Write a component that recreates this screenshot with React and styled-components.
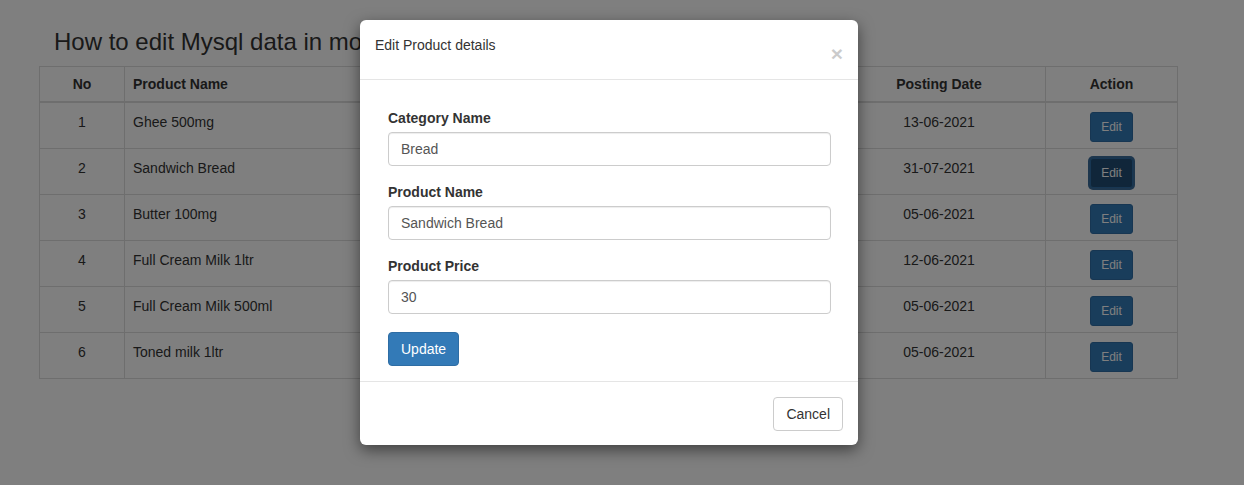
import React from "react";
import styled, { createGlobalStyle } from "styled-components";

const Global = createGlobalStyle`
  body { margin: 0; font-family: "Liberation Sans", Arial, sans-serif; font-size: 14px; color: #333; background: #fff; }
`;
const Page = styled.div` position: relative; width: 1244px; height: 485px; overflow: hidden; `;
const Container = styled.div` padding: 27px 66px 0 39px; `;
const Title = styled.h2`
  margin: 0 0 9px 15px; font-size: 24px; font-weight: 400; line-height: 30px;
  width: 306px; white-space: nowrap; overflow: hidden;
`;
const Table = styled.table` border-collapse: collapse; width: 1139px; table-layout: fixed; `;
const Th = styled.th`
  border: 1px solid #ddd; border-bottom: 2px solid #ddd; height: 34px; padding: 0 8px;
  text-align: ${p => p.$left ? "left" : "center"}; width: ${p => p.$w || "auto"};
`;
const Td = styled.td`
  border: 1px solid #ddd; height: 46px; padding: 11px 8px 0; vertical-align: top; box-sizing: border-box;
  text-align: ${p => p.$left ? "left" : "center"};
`;
const EditBtn = styled.button`
  font: 12px "Liberation Sans", Arial, sans-serif; color: #fff; background: #337ab7; border: 1px solid #2e6da4;
  border-radius: 3px; width: 43px; height: 30px; padding: 0; margin-top: -2px;
  ${p => p.$active && "background:#204d74; box-shadow: 0 0 0 2px #3b6c9a;"}
`;
const Backdrop = styled.div` position: absolute; inset: 0; background: rgba(0,0,0,0.5); `;
const Modal = styled.div`
  position: absolute; left: 360px; top: 20px; width: 498px; background: #fff; border-radius: 6px;
  box-shadow: 0 5px 15px rgba(0,0,0,.5); display: flex; flex-direction: column;
`;
const Header = styled.div` height: 60px; border-bottom: 1px solid #e5e5e5; padding: 17px 15px 0; box-sizing: border-box; position: relative; `;
const HTitle = styled.div` font-size: 14px; line-height: 16px; `;
const Close = styled.span` position: absolute; right: 15px; top: 23px; font-size: 21px; font-weight: 700; color: #000; opacity: .2; line-height: 1; `;
const Body = styled.div` padding: 30px 27px 15px 28px; `;
const Label = styled.label` display: block; font-weight: 700; margin-bottom: 6px; line-height: 16px; `;
const Input = styled.input`
  display: block; width: 100%; box-sizing: border-box; height: 34px; padding: 6px 12px; font: 14px "Liberation Sans", Arial, sans-serif;
  color: #555; border: 1px solid #ccc; border-radius: 4px; box-shadow: inset 0 1px 1px rgba(0,0,0,.075); margin-bottom: 18px;
`;
const Update = styled.button`
  font: 14px "Liberation Sans", Arial, sans-serif; color: #fff; background: #337ab7; border: 1px solid #2e6da4;
  border-radius: 4px; height: 34px; padding: 0 12px;
`;
const Footer = styled.div` border-top: 1px solid #e5e5e5; padding: 15px 15px 14px; display: flex; justify-content: flex-end; `;
const Cancel = styled.button`
  font: 14px "Liberation Sans", Arial, sans-serif; color: #333; background: #fff; border: 1px solid #ccc;
  border-radius: 4px; height: 34px; padding: 0 12px;
`;

const rows = [
  ["Ghee 500mg", "13-06-2021"], ["Sandwich Bread", "31-07-2021"], ["Butter 100mg", "05-06-2021"],
  ["Full Cream Milk 1ltr", "12-06-2021"], ["Full Cream Milk 500ml", "05-06-2021"], ["Toned milk 1ltr", "05-06-2021"],
];

export default function App() {
  return (
    <Page>
      <Global />
      <Container>
        <Title>How to edit Mysql data in modal using PHP</Title>
        <Table>
          <thead><tr>
            <Th $w="68px">No</Th><Th $left>Product Name</Th><Th $w="196px">Posting Date</Th><Th $w="115px">Action</Th>
          </tr></thead>
          <tbody>
            {rows.map((r, i) => (
              <tr key={i}>
                <Td>{i + 1}</Td><Td $left>{r[0]}</Td><Td>{r[1]}</Td>
                <Td><EditBtn $active={i === 1}>Edit</EditBtn></Td>
              </tr>
            ))}
          </tbody>
        </Table>
      </Container>
      <Backdrop />
      <Modal>
        <Header><HTitle>Edit Product details</HTitle><Close>×</Close></Header>
        <Body>
          <Label>Category Name</Label><Input defaultValue="Bread" />
          <Label>Product Name</Label><Input defaultValue="Sandwich Bread" />
          <Label>Product Price</Label><Input defaultValue="30" />
          <Update>Update</Update>
        </Body>
        <Footer><Cancel>Cancel</Cancel></Footer>
      </Modal>
    </Page>
  );
}
